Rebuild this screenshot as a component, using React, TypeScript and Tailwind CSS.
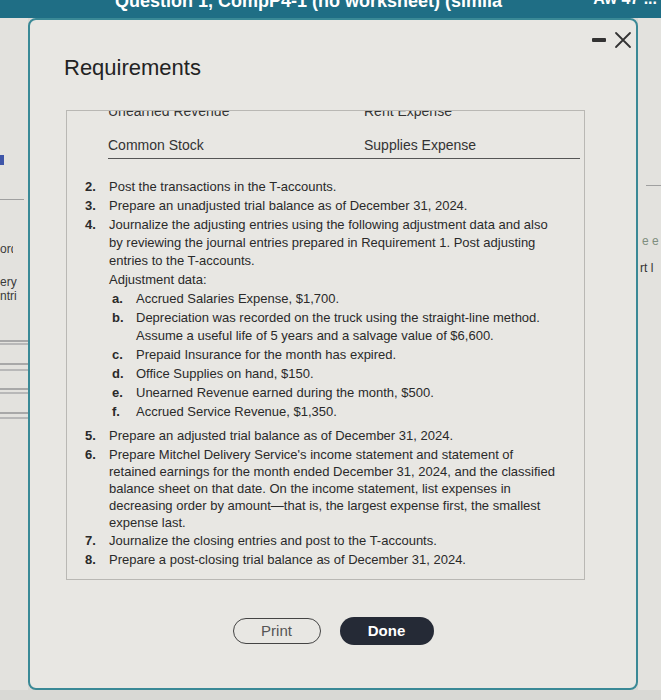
import React from "react";

function Num({ n }: { n: string }) {
  return <span className="w-[24px] shrink-0 font-bold">{n}</span>;
}

function Item({ n, children }: { n: string; children: React.ReactNode }) {
  return (
    <li className="flex">
      <Num n={n} />
      <div className="w-[450px]">{children}</div>
    </li>
  );
}

function Sub({ n, children }: { n: string; children: React.ReactNode }) {
  return (
    <li className="flex pl-[3px]">
      <span className="w-[24px] shrink-0 font-bold">{n}</span>
      <div className="flex-1">{children}</div>
    </li>
  );
}

export default function App() {
  return (
    <div className="w-[661px] h-[700px] overflow-hidden bg-[#d9d9d5] flex flex-col pb-[10px] font-['Liberation_Sans',Arial,sans-serif] text-[#2a2a2a]">
      <div className="h-[18px] shrink-0 bg-[#1f6e85] flex overflow-hidden">
        <div className="ml-[115px] -mt-[10px] text-white font-bold text-[18px] leading-[22px] whitespace-nowrap">
          Question 1, CompP4-1 (no worksheet) (simila
        </div>
        <div className="ml-auto mr-[4px] -mt-[12px] text-white font-bold text-[16px] leading-[22px] whitespace-nowrap">
          Aw 47 ...
        </div>
      </div>
      <div className="flex flex-1 min-h-0">
        <div className="w-[28px] shrink-0 bg-[#e3e2de] flex flex-col text-[12px] leading-[14px] text-[#3a3a3a] overflow-hidden">
          <div className="mt-[137px] h-[10px] w-[4px] bg-[#3f56a8]" />
          <div className="mt-[34px] h-px w-[24px] bg-[#a0a0a0]" />
          <div className="mt-[42px] w-[13px] overflow-hidden whitespace-nowrap">ord</div>
          <div className="mt-[19px] whitespace-nowrap">ery</div>
          <div className="whitespace-nowrap">ntri</div>
          <div className="mt-[37px] h-[2px] bg-[#a8a8a8]" />
          <div className="mt-[1px] h-[2px] bg-[#b8b8b8]" />
          <div className="mt-[18px] h-[2px] bg-[#a8a8a8]" />
          <div className="mt-[4px] h-[2px] bg-[#b8b8b8]" />
          <div className="mt-[17px] h-[2px] bg-[#a8a8a8]" />
          <div className="mt-[2px] h-[2px] bg-[#b8b8b8]" />
          <div className="mt-[18px] h-[2px] bg-[#a8a8a8]" />
          <div className="mt-[3px] h-[2px] bg-[#b8b8b8]" />
        </div>

        <div className="flex-1 border-[2px] border-[#3a8996] rounded-[8px] bg-[#e8e7e3] flex flex-col">
          <div className="h-[30px] pt-[10px] pr-[4px] flex justify-end items-center gap-[8px]">
            <div className="w-[14px] h-[4px] bg-[#333] rounded-[1px]" />
            <svg width="18" height="18" viewBox="0 0 18 18">
              <path d="M2 2 L16 16 M16 2 L2 16" stroke="#333" strokeWidth="1.8" strokeLinecap="round" />
            </svg>
          </div>
          <div className="ml-[34px] mt-[5px] text-[22px] leading-[26px] text-[#232323]">Requirements</div>

          <div className="ml-[36px] mr-[51px] mt-[29px] h-[470px] border border-[#b9b8b4] overflow-hidden">
            <div className="-mt-[10px]">
              <div className="flex text-[14px] leading-[20px] text-[#333]">
                <div className="ml-[41px] w-[256px]">Unearned Revenue</div>
                <div>Rent Expense</div>
              </div>
              <div className="ml-[41px] mr-[4px] mt-[14px] pb-[3px] border-b-[1.5px] border-[#555] flex text-[14px] leading-[20px] text-[#333]">
                <div className="w-[256px]">Common Stock</div>
                <div>Supplies Expense</div>
              </div>
              <ol className="mt-[19px] pl-[18px] text-[13px] leading-[18px] flex flex-col gap-[1px]">
                <Item n="2.">Post the transactions in the T-accounts.</Item>
                <Item n="3.">Prepare an unadjusted trial balance as of December 31, 2024.</Item>
                <Item n="4.">
                  Journalize the adjusting entries using the following adjustment data and also by reviewing the
                  journal entries prepared in Requirement 1. Post adjusting entries to the T-accounts.
                  <div className="mt-[1px]">Adjustment data:</div>
                  <ul className="mt-[1px] mb-[5px] flex flex-col gap-[1px]">
                    <Sub n="a.">Accrued Salaries Expense, $1,700.</Sub>
                    <Sub n="b.">
                      Depreciation was recorded on the truck using the straight-line method. Assume a useful life of 5
                      years and a salvage value of $6,600.
                    </Sub>
                    <Sub n="c.">Prepaid Insurance for the month has expired.</Sub>
                    <Sub n="d.">Office Supplies on hand, $150.</Sub>
                    <Sub n="e.">Unearned Revenue earned during the month, $500.</Sub>
                    <Sub n="f.">Accrued Service Revenue, $1,350.</Sub>
                  </ul>
                </Item>
                <Item n="5.">Prepare an adjusted trial balance as of December 31, 2024.</Item>
                <Item n="6.">
                  <div className="leading-[17px]">
                    Prepare Mitchel Delivery Service's income statement and statement of retained earnings for the
                    month ended December 31, 2024, and the classified balance sheet on that date. On the income
                    statement, list expenses in decreasing order by amount—that is, the largest expense first, the
                    smallest expense last.
                  </div>
                </Item>
                <Item n="7.">Journalize the closing entries and post to the T-accounts.</Item>
                <Item n="8.">Prepare a post-closing trial balance as of December 31, 2024.</Item>
              </ol>
            </div>
          </div>

          <div className="mt-[37px] flex justify-center items-center gap-[19px]">
            <button className="w-[88px] h-[26px] rounded-full border-[1.5px] border-[#444] text-[15px] text-[#555] bg-transparent">
              Print
            </button>
            <button className="w-[94px] h-[28px] rounded-full bg-[#252a36] text-[15px] font-bold text-white">
              Done
            </button>
          </div>
        </div>

        <div className="w-[23px] shrink-0 bg-[#e3e2de] flex flex-col text-[12px] leading-[14px] overflow-hidden">
          <div className="mt-[167px] ml-[8px] h-px bg-[#a0a0a0]" />
          <div className="mt-[48px] ml-[4px] whitespace-nowrap text-[#7f8f7f]">e e</div>
          <div className="mt-[13px] ml-[2px] whitespace-nowrap text-[#333]">rt l</div>
        </div>
      </div>
    </div>
  );
}
